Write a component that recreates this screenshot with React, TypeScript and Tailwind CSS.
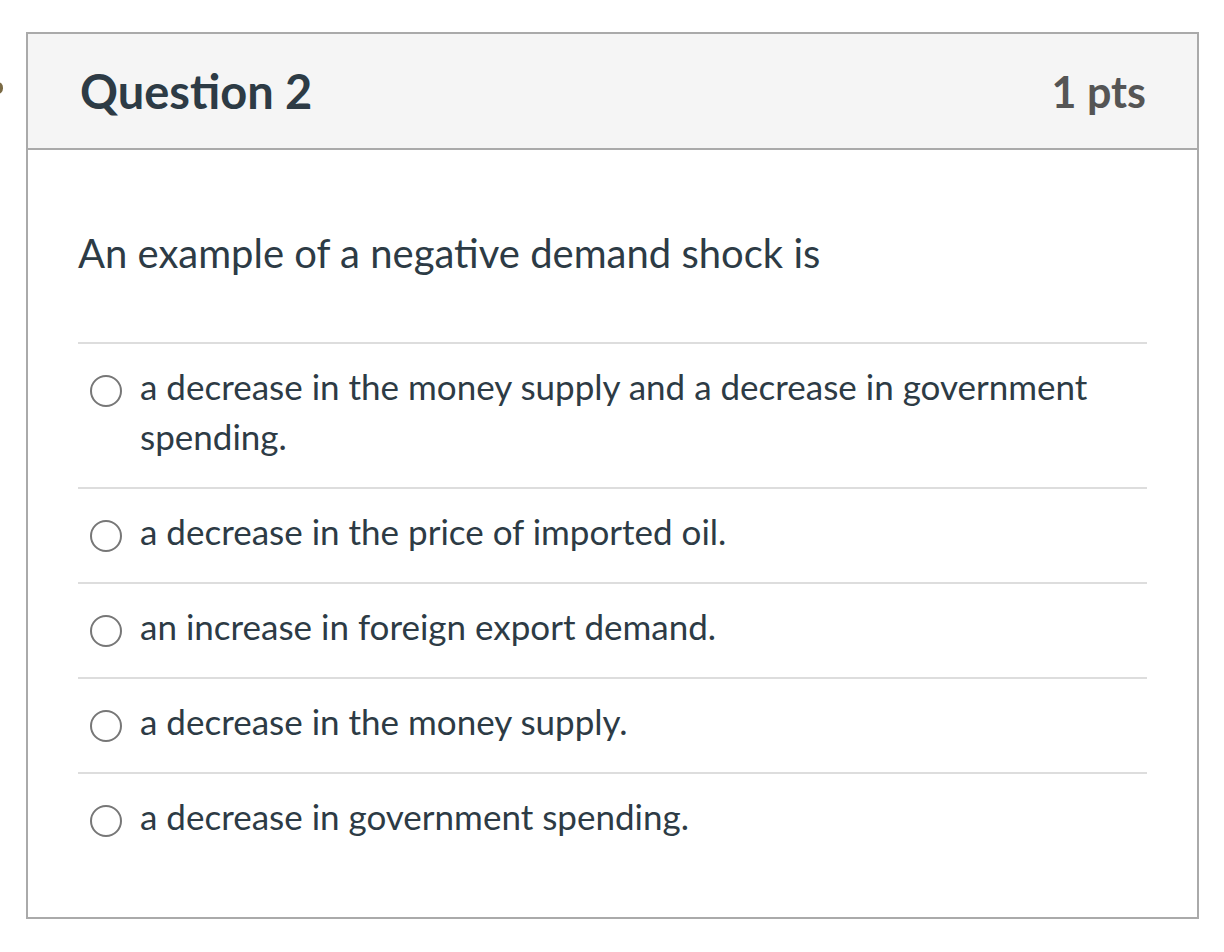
import React from 'react';

const answers = [
  'a decrease in the money supply and a decrease in government spending.',
  'a decrease in the price of imported oil.',
  'an increase in foreign export demand.',
  'a decrease in the money supply.',
  'a decrease in government spending.',
];

function Radio() {
  return (
    <span className="mt-[14px] h-[32px] w-[32px] shrink-0 rounded-full border-2 border-[#777777] bg-white" />
  );
}

export default function App() {
  return (
    <div
      className="relative min-h-screen bg-white pt-[32px] pl-[26px] pr-[25px] text-[#2d3b45]"
      style={{ fontFamily: 'Lato, "Open Sans", sans-serif' }}
    >
      {/* sliver of something cut off at the left edge */}
      <span className="absolute left-[-8px] top-[82px] h-[12px] w-[11px] rounded-full bg-[#7a6a44]" />

      <div className="h-[887px] border-2 border-[#aaaaaa]">
        <div className="flex h-[116px] items-center justify-between border-b-2 border-[#aaaaaa] bg-[#f5f5f5] pl-[52px] pr-[51px]">
          <h2 className="text-[47px] font-bold leading-none">Question 2</h2>
          <span className="text-[43px] font-bold leading-none text-[#555555]">1 pts</span>
        </div>

        <div className="px-[50px]">
          <p className="pt-[79px] pb-[65px] text-[40px] leading-[48px]">
            An example of a negative demand shock is
          </p>

          <ul className="border-t-2 border-[#dddddd]">
            {answers.map((a, i) => (
              <li
                key={i}
                className={`flex gap-[18px] pt-[17px] pb-[26px] pl-[12px] pr-[20px] ${
                  i < answers.length - 1 ? 'border-b-2 border-[#dddddd]' : ''
                }`}
              >
                <Radio />
                <span className="text-[35px] leading-[50px]">{a}</span>
              </li>
            ))}
          </ul>
        </div>
      </div>
    </div>
  );
}
